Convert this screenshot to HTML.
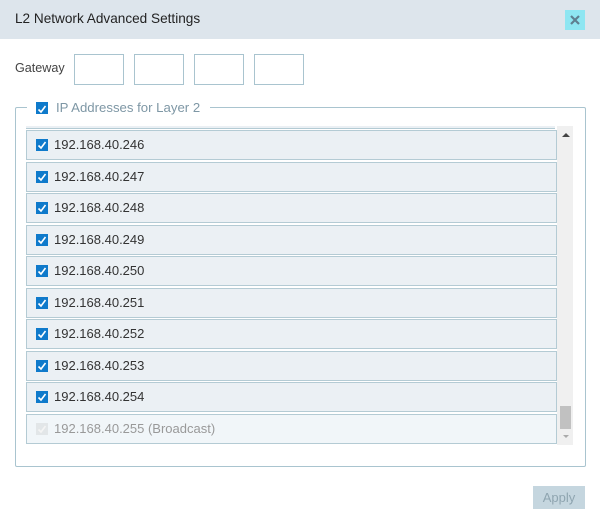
<!DOCTYPE html><html><head><style>
body{margin:0;width:600px;height:516px;background:#fff;font-family:"Liberation Sans",sans-serif;position:relative;overflow:hidden;color:#333}
.a{position:absolute}
.hd{left:0;top:0;width:600px;height:39px;background:#dde5ec}
.box{top:54px;width:48px;height:29px;border:1px solid #a9c4cf}
.row{left:26px;width:529px;height:28px;background:#ebf0f4;border:1px solid #b4cbd4;font-size:13px;line-height:28px}
.cb{position:absolute;left:9px;top:8px;width:12px;height:12px;background:#0f7acb}
.cb svg{position:absolute;left:0;top:0}
.row span{position:absolute;left:27px;top:0}
</style></head><body>
<div class="a hd"></div>
<div class="a" style="left:15px;top:11px;font-size:13.6px;color:#222">L2 Network Advanced Settings</div>
<div class="a" style="left:565px;top:10px;width:20px;height:20px;background:#8ee6f2"><svg width="20" height="20"><path d="M6 6L14 14M14 6L6 14" stroke="#5f7f90" stroke-width="2.2"/></svg></div>
<div class="a" style="left:15px;top:61px;font-size:12.6px;color:#444">Gateway</div>
<div class="a box" style="left:74px"></div><div class="a box" style="left:134px"></div><div class="a box" style="left:194px"></div><div class="a box" style="left:254px"></div>
<div class="a" style="left:15px;top:107px;width:569px;height:358px;border:1px solid #a9c4cf;border-radius:2px"></div>
<div class="a" style="left:27px;top:98px;width:183px;height:18px;background:#fff"></div>
<div class="a" style="left:36px;top:102px;width:12px;height:12px;background:#0f7acb"><svg width="12" height="12"><path d="M2.5 6.5L5 9L9.5 3" stroke="#fff" stroke-width="1.6" fill="none"/></svg></div>
<div class="a" style="left:56px;top:100px;font-size:13.2px;color:#7e97a5">IP Addresses for Layer 2</div>
<div class="a" style="left:26px;top:126px;width:529px;height:2px;border-bottom:1px solid #b4cbd4;background:#ebf0f4"></div>
<div class="a" style="left:557px;top:126px;width:16px;height:319px;background:#f0f0f0"></div>
<div class="a" style="left:562px;top:133px;width:0;height:0;border-left:4px solid transparent;border-right:4px solid transparent;border-bottom:4px solid #444"></div>
<div class="a" style="left:563px;top:435px;width:0;height:0;border-left:3px solid transparent;border-right:3px solid transparent;border-top:3px solid #aaa"></div>
<div class="a" style="left:560px;top:406px;width:11px;height:23px;background:#c1c1c1"></div>
<div class="a row" style="top:130px"><div class="cb"><svg width="12" height="12"><path d="M2.5 6.5L5 9L9.5 3" stroke="#fff" stroke-width="1.6" fill="none"/></svg></div><span>192.168.40.246</span></div>
<div class="a row" style="top:161.5px"><div class="cb"><svg width="12" height="12"><path d="M2.5 6.5L5 9L9.5 3" stroke="#fff" stroke-width="1.6" fill="none"/></svg></div><span>192.168.40.247</span></div>
<div class="a row" style="top:193px"><div class="cb"><svg width="12" height="12"><path d="M2.5 6.5L5 9L9.5 3" stroke="#fff" stroke-width="1.6" fill="none"/></svg></div><span>192.168.40.248</span></div>
<div class="a row" style="top:224.5px"><div class="cb"><svg width="12" height="12"><path d="M2.5 6.5L5 9L9.5 3" stroke="#fff" stroke-width="1.6" fill="none"/></svg></div><span>192.168.40.249</span></div>
<div class="a row" style="top:256px"><div class="cb"><svg width="12" height="12"><path d="M2.5 6.5L5 9L9.5 3" stroke="#fff" stroke-width="1.6" fill="none"/></svg></div><span>192.168.40.250</span></div>
<div class="a row" style="top:287.5px"><div class="cb"><svg width="12" height="12"><path d="M2.5 6.5L5 9L9.5 3" stroke="#fff" stroke-width="1.6" fill="none"/></svg></div><span>192.168.40.251</span></div>
<div class="a row" style="top:319px"><div class="cb"><svg width="12" height="12"><path d="M2.5 6.5L5 9L9.5 3" stroke="#fff" stroke-width="1.6" fill="none"/></svg></div><span>192.168.40.252</span></div>
<div class="a row" style="top:350.5px"><div class="cb"><svg width="12" height="12"><path d="M2.5 6.5L5 9L9.5 3" stroke="#fff" stroke-width="1.6" fill="none"/></svg></div><span>192.168.40.253</span></div>
<div class="a row" style="top:382px"><div class="cb"><svg width="12" height="12"><path d="M2.5 6.5L5 9L9.5 3" stroke="#fff" stroke-width="1.6" fill="none"/></svg></div><span>192.168.40.254</span></div>
<div class="a row" style="top:413.5px;background:#f1f6f9;color:#999"><div class="cb" style="background:#e2e6e8"><svg width="12" height="12"><path d="M2.5 6.5L5 9L9.5 3" stroke="#f4f4f4" stroke-width="1.6" fill="none"/></svg></div><span>192.168.40.255 (Broadcast)</span></div>
<div class="a" style="left:533px;top:486px;width:52px;height:23px;background:#c5d6df;color:#8fa5b0;font-size:13px;line-height:23px;text-align:center">Apply</div>
</body></html>
